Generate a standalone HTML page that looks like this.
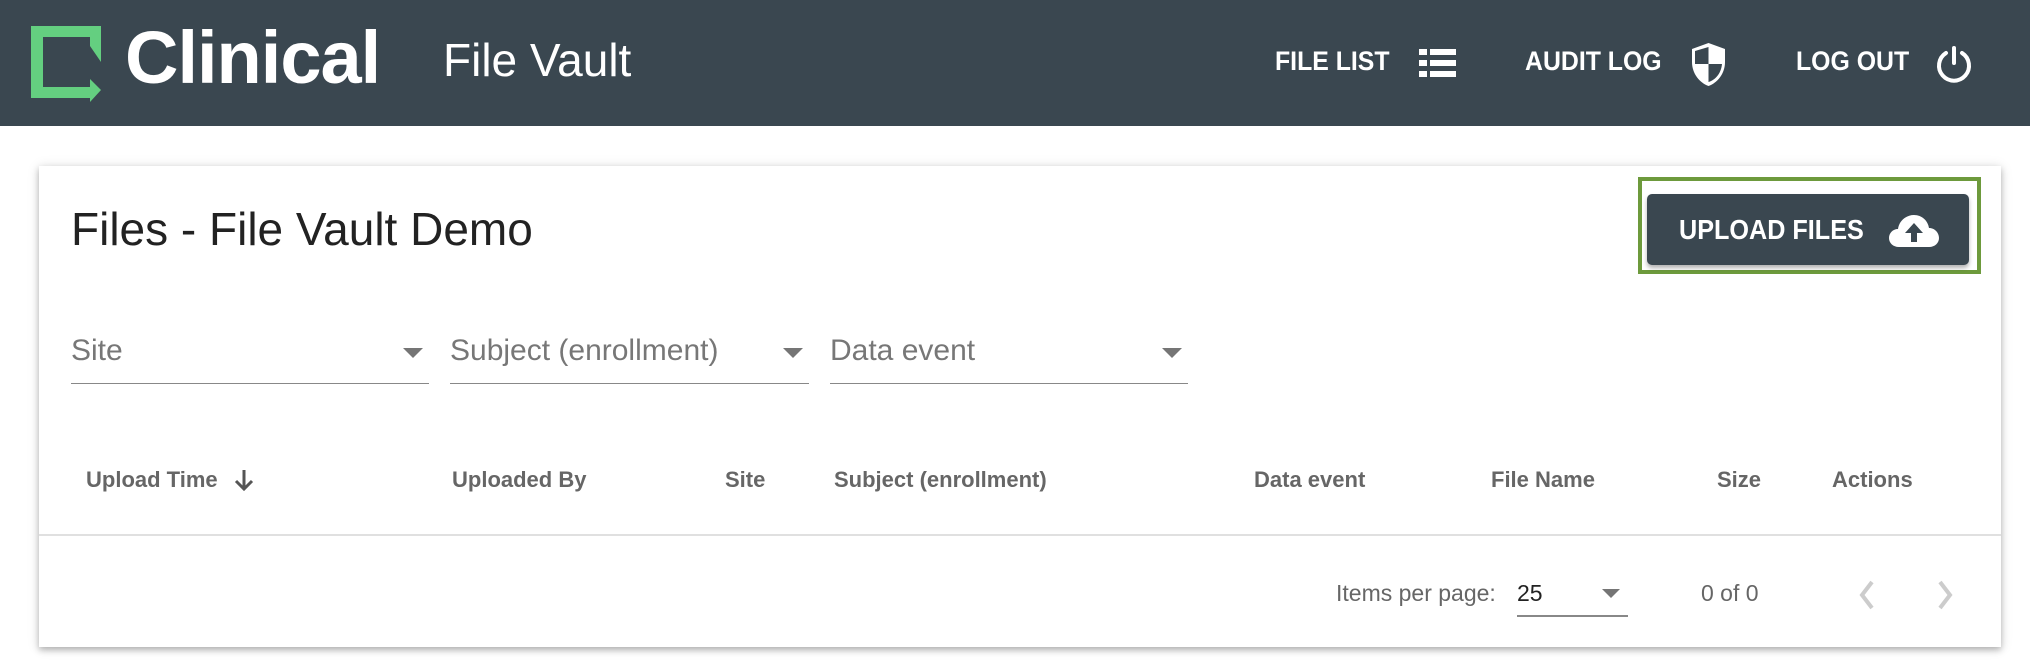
<!DOCTYPE html>
<html><head><meta charset="utf-8"><style>
*{margin:0;padding:0;box-sizing:border-box}
body{width:2030px;height:672px;background:#fff;font-family:"Liberation Sans",sans-serif;position:relative;overflow:hidden}
.hdr{position:absolute;left:0;top:0;width:2030px;height:126px;background:#3a4750}
.a{position:absolute;white-space:nowrap}
.nav{color:#fff;font-weight:bold;font-size:27px;top:46px;transform:scaleX(.92);transform-origin:left}
.card{position:absolute;left:39px;top:166px;width:1962px;height:481px;background:#fff;box-shadow:0 3px 6px rgba(0,0,0,.25),0 1px 12px rgba(0,0,0,.12)}
.dd{position:absolute;top:332px;height:52px;border-bottom:1.5px solid #888;color:#777;font-size:30px}
.dd span{position:absolute;left:0;top:2px}
.tri{position:absolute;width:0;height:0;border-left:10px solid transparent;border-right:10px solid transparent;border-top:10px solid #757575}
.th{position:absolute;top:467px;font-size:22px;font-weight:bold;color:#666}
</style></head><body>
<div class="hdr"></div>
<svg class="a" style="left:31px;top:26px" width="70" height="76" viewBox="0 0 70 76">
<path d="M0 0H70V36L59 20V11H12V61H59V53L70 64L59 76V72H0Z" fill="#64cf80"/>
</svg>
<div class="a" style="left:125px;top:15px;color:#fff;font-weight:bold;font-size:74px;letter-spacing:-1px">Clinical</div>
<div class="a" style="left:443px;top:33px;color:#fff;font-size:46px">File Vault</div>
<div class="a nav" style="left:1275px">FILE LIST</div>
<svg class="a" style="left:1419px;top:49px" width="37" height="28" viewBox="0 0 37 28" fill="#fff"><rect x="0" y="0" width="8" height="6"/><rect x="11" y="0" width="26" height="6"/><rect x="0" y="11" width="8" height="6"/><rect x="11" y="11" width="26" height="6"/><rect x="0" y="22" width="8" height="6"/><rect x="11" y="22" width="26" height="6"/></svg>
<div class="a nav" style="left:1525px">AUDIT LOG</div>
<svg class="a" style="left:1690px;top:42px" width="37" height="45" viewBox="0 0 37 45"><path d="M18.5 1L35 7V20C35 32 27 41 18.5 44C10 41 2 32 2 20V7Z" fill="#fff"/><path d="M18.5 5V22H5V9Z M18.5 22H32C31 32 25 38 18.5 40Z" fill="#3a4750"/></svg>
<div class="a nav" style="left:1796px">LOG OUT</div>
<svg class="a" style="left:1935px;top:45px" width="38" height="38" viewBox="0 0 38 38" fill="none" stroke="#fff" stroke-width="4" stroke-linecap="round"><path d="M11 8A15 15 0 1 0 27 8"/><path d="M19 3V18"/></svg>
<div class="card"></div>
<div class="a" style="left:71px;top:202px;font-size:46px;color:#222">Files - File Vault Demo</div>
<div class="a" style="left:1638px;top:177px;width:343px;height:97px;border:4px solid #6d9a3c"></div>
<div class="a" style="left:1647px;top:194px;width:322px;height:71px;background:#3a4750;border-radius:5px;box-shadow:0 3px 4px rgba(0,0,0,.3)"></div>
<div class="a" style="left:1679px;top:214px;color:#fff;font-weight:bold;font-size:28px;transform:scaleX(.9);transform-origin:left">UPLOAD FILES</div>
<svg class="a" style="left:1889px;top:213px" width="50" height="35" viewBox="0 0 50 35"><path d="M10 34C4 34 0 30 0 25C0 20 4 16 9 16C10 8 17 2 25 2C33 2 39 8 40 15C46 15 50 20 50 25C50 30 46 34 40 34Z" fill="#fff"/><path d="M25 10L34 20H28V29H22V20H16Z" fill="#3a4750"/></svg>
<div class="dd" style="left:71px;width:358px"><span>Site</span><div class="tri" style="right:6px;top:16px"></div></div>
<div class="dd" style="left:450px;width:359px"><span>Subject (enrollment)</span><div class="tri" style="right:6px;top:16px"></div></div>
<div class="dd" style="left:830px;width:358px"><span>Data event</span><div class="tri" style="right:6px;top:16px"></div></div>
<div class="th" style="left:86px">Upload Time</div>
<svg class="a" style="left:234px;top:468px" width="20" height="24" viewBox="0 0 20 24" fill="none" stroke="#555" stroke-width="3"><path d="M10 2V21M2 13L10 21L18 13"/></svg>
<div class="th" style="left:452px">Uploaded By</div>
<div class="th" style="left:725px">Site</div>
<div class="th" style="left:834px">Subject (enrollment)</div>
<div class="th" style="left:1254px">Data event</div>
<div class="th" style="left:1491px">File Name</div>
<div class="th" style="left:1717px">Size</div>
<div class="th" style="left:1832px">Actions</div>
<div class="a" style="left:39px;top:534px;width:1962px;height:2px;background:#e0e0e0"></div>
<div class="a" style="left:1336px;top:580px;font-size:23px;color:#666">Items per page:</div>
<div class="a" style="left:1517px;top:580px;font-size:23px;color:#222">25</div>
<div class="tri" style="left:1602px;top:589px;border-left-width:9px;border-right-width:9px;border-top-width:9px"></div>
<div class="a" style="left:1517px;top:615px;width:111px;height:2px;background:#888"></div>
<div class="a" style="left:1701px;top:580px;font-size:23px;color:#666">0 of 0</div>
<svg class="a" style="left:1857px;top:580px" width="20" height="30" viewBox="0 0 20 30" fill="none" stroke="#ccc" stroke-width="4"><path d="M15 2L5 15L15 28"/></svg>
<svg class="a" style="left:1935px;top:580px" width="20" height="30" viewBox="0 0 20 30" fill="none" stroke="#ccc" stroke-width="4"><path d="M5 2L15 15L5 28"/></svg>
</body></html>
